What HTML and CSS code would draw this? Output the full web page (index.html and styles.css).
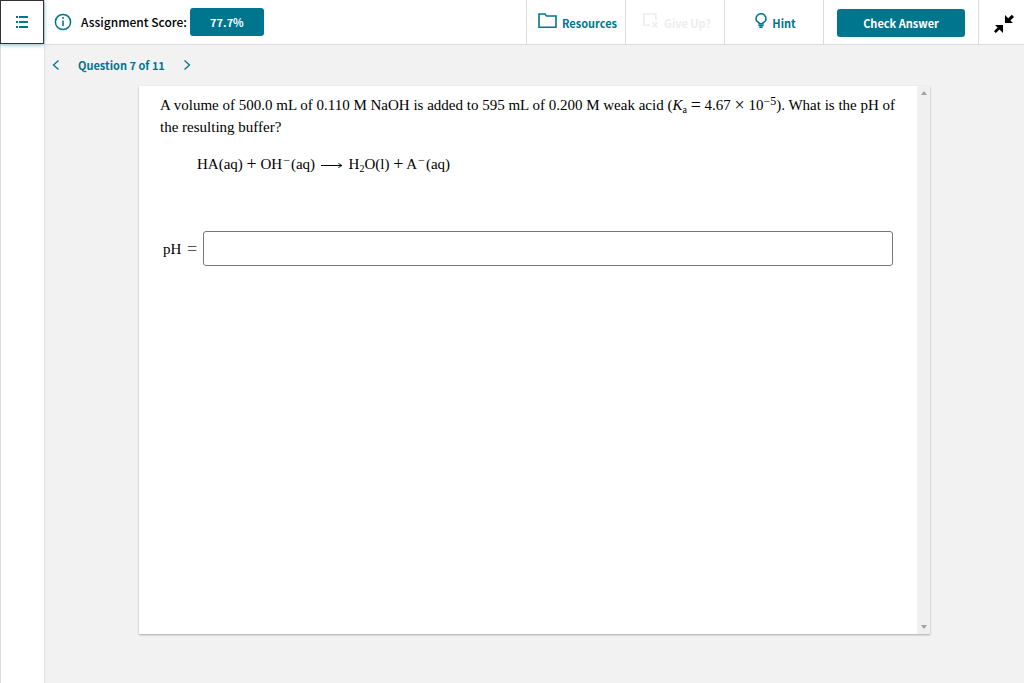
FILE: index.html
```
<!DOCTYPE html>
<html lang="en">

<head>
   <meta charset="UTF-8">
   <meta name="viewport" content="width=device-width, initial-scale=1.0">
   <title>Question 7 of 11</title>
   <link rel="stylesheet" href="styles.css">
</head>

<body>
   <aside class="sidebar">
      <button class="menu" aria-label="Question list">
         <svg width="14" height="14" viewBox="0 0 14 14" fill="currentColor">
            <path d="M1 1h2v2H1zM4 1h9v2H4zM1 6h2v2H1zM4 6h9v2H4zM1 11h2v2H1zM4 11h9v2H4z" />
         </svg>
      </button>
   </aside>
   <div class="page">
      <header class="topbar">
         <div class="score">
            <svg width="18" height="18" viewBox="0 0 18 18" fill="none" stroke="currentColor">
               <circle cx="9" cy="9" r="7.6" stroke-width="1.5" />
               <path d="M9 7.500V13" stroke-width="1.6" />
               <circle cx="9" cy="5" r="1" fill="currentColor" stroke="none" />
            </svg>
            <span class="score-label">Assignment Score:</span>
            <button class="btn score-btn">77.7%</button>
         </div>
         <nav class="tools">
            <button class="tool">
               <svg width="19" height="16" viewBox="0 0 19 16" fill="none" stroke="currentColor" stroke-width="1.6">
                  <path d="M1 14.2V1h6l1.5 2H18v11.2z" />
               </svg>
               <span class="tool-text">Resources</span>
            </button>
            <button class="tool" disabled>
               <svg width="17" height="16" viewBox="0 0 17 16" fill="none" stroke="currentColor" stroke-width="1.6">
                  <path d="M8 12.2H1.8V1h12v6M10.5 9.5l5 5M15.5 9.5l-5 5" />
               </svg>
               <span class="tool-text">Give Up?</span>
            </button>
            <button class="tool">
               <svg width="12" height="16" viewBox="0 0 12 16" fill="none" stroke="currentColor" stroke-width="1.5">
                  <path d="M4 10.8V9.6C2 8.8 1 7.4 1 5.7a5 5 0 0 1 10 0c0 1.700-1 3.100-3 3.900v1.200zM3.400 12.600h5.200M4.400 14.300h3.200" />
               </svg>
               <span class="tool-text">Hint</span>
            </button>
            <div class="check">
               <button class="btn check-btn">Check Answer</button>
            </div>
            <button class="shrink" aria-label="Exit full screen">
               <svg width="20" height="20" viewBox="0 0 20 20" fill="currentColor">
                  <path d="M11 1v8h8l-2.600-2.600L20 3l-2.200-2.200-3.600 3.500z" />
                  <path d="M9 19v-8H1l2.600 2.600L0 17.200l1.800 1.800 3.700-3.500z" />
               </svg>
            </button>
         </nav>
      </header>
      <div class="pager">
         <button class="arrow" aria-label="Previous question">
            <svg width="8" height="12" viewBox="0 0 8 12" fill="none" stroke="currentColor" stroke-width="1.3">
               <path d="M6.500 1.500L1.500 6l5 4.500" />
            </svg>
         </button>
         <span>Question 7 of 11</span>
         <button class="arrow" aria-label="Next question">
            <svg width="8" height="12" viewBox="0 0 8 12" fill="none" stroke="currentColor" stroke-width="1.3">
               <path d="M1.500 1.500l5 4.500-5 4.500" />
            </svg>
         </button>
      </div>
      <main class="card">
         <div class="question">
            <p>A volume of 500.0 mL of 0.110 M NaOH is added to 595 mL of 0.200 M weak acid (<i>K</i><sub>a</sub> <span class="op">=</span> 4.67 <span class="op">×</span> 10<sup>−5</sup>). What is the pH of the resulting buffer?</p>
            <p class="equation">HA(aq) <span class="op">+</span> OH<sup>−</sup>(aq)
               <svg class="long-arrow" width="22" height="8" viewBox="0 0 22 8" fill="none" stroke="currentColor">
                  <path d="M0 4.500h21M17.500 2q1 2 3.500 2.500-2.500.5-3.500 2.500" />
               </svg>
               H<sub>2</sub>O(l) <span class="op">+</span> A<sup>−</sup>(aq)</p>
            <div class="answer">
               <label for="ph">pH <span class="op equals">=</span></label>
               <input class="ph-input" id="ph" type="text">
            </div>
         </div>
         <div class="scroll">
            <svg width="6" height="4" viewBox="0 0 6 4" fill="currentColor"><path d="M0 4l3-4 3 4z" /></svg>
            <svg width="6" height="4" viewBox="0 0 6 4" fill="currentColor"><path d="M0 0l3 4 3-4z" /></svg>
         </div>
      </main>
   </div>
</body>

</html>
```
FILE: styles.css
```
* {
   padding: 0;
   margin: 0;
   box-sizing: border-box;
}

body {
   display: flex;
   min-height: 100vh;
   background-color: #f2f2f2;
   color: #000;
   font-family: "Noto Sans CJK SC", "Open Sans", sans-serif;
   font-size: 11px;
   font-weight: 700;
}

button {
   border: none;
   background: none;
   color: #00758e;
   font: inherit;
   cursor: pointer;
}

svg {
   flex: none;
}

.sidebar {
   width: 45px;
   flex: none;
   background-color: #fff;
   border-left: 1px solid #dcdcdc;
   border-right: 1px solid #e2e2e2;
}

.menu {
   display: flex;
   align-items: center;
   justify-content: center;
   width: 44px;
   height: 44px;
   margin-left: -1px;
   border: 1px solid #333;
   background-color: #fff;
   box-shadow: 0 1px 4px rgba(0, 117, 142, 0.5);
   position: relative;
}

.page {
   display: flex;
   flex-direction: column;
   flex: 1;
   min-width: 0;
}

.topbar {
   display: flex;
   justify-content: space-between;
   height: 45px;
   background-color: #fff;
   border-bottom: 1px solid #dcdcdc;
}

.score {
   display: flex;
   align-items: center;
   padding-left: 9px;
   color: #00758e;
}

.score-label {
   margin: 0 3px 2px 9px;
   color: #000;
   font-size: 12px;
   font-weight: 500;
}

.btn {
   height: 28px;
   padding-bottom: 1px;
   border-radius: 3px;
   background-color: #00758e;
   color: #fff;
}

.score-btn {
   width: 74px;
}

.tools {
   display: flex;
}

.tool {
   display: flex;
   align-items: center;
   justify-content: center;
   gap: 5px;
   width: 99px;
   padding: 0 0 3px 3px;
   border-left: 1px solid #dcdcdc;
}

.tool-text {
   padding-top: 4px;
}

.tool:disabled {
   color: #ededed;
   cursor: default;
}

.check {
   display: flex;
   align-items: center;
   padding: 2px 13px 0;
   border-left: 1px solid #dcdcdc;
}

.check-btn {
   width: 128px;
}

.shrink {
   display: flex;
   align-items: center;
   justify-content: center;
   width: 46px;
   padding: 4px 0 0 4px;
   border-left: 1px solid #dcdcdc;
   color: #000;
}

.pager {
   display: flex;
   align-items: center;
   gap: 18px;
   height: 41px;
   padding: 0 0 2px 7px;
   color: #00758e;
}

.arrow {
   display: flex;
}

.card {
   display: flex;
   width: 100%;
   max-width: 791px;
   min-height: 548px;
   margin: 0 auto;
   background-color: #fff;
   box-shadow: 0 1px 2px rgba(0, 0, 0, 0.3);
}

.question {
   flex: 1;
   padding: 8px 20px 8px 21px;
   font-family: "Liberation Serif", serif;
   font-size: 15px;
   font-weight: 400;
   line-height: 22px;
}

sub,
sup {
   font-size: 10px;
   line-height: 0;
   vertical-align: -3px;
}

sup {
   font-size: 12px;
   vertical-align: 5px;
}

.op {
   font-size: 18px;
   line-height: 0;
   vertical-align: -1px;
}

.equation {
   margin-top: 15px;
   padding-left: 37px;
}

.equation sup {
   margin: 0 1px;
}

.long-arrow {
   margin: 0 2px;
}

.answer {
   display: flex;
   align-items: center;
   gap: 6px;
   margin-top: 56px;
   padding: 0 4px 0 3px;
}

.equals {
   margin-left: 2px;
   color: #555;
}

.ph-input {
   flex: 1;
   min-width: 0;
   height: 35px;
   padding: 0 8px;
   border: 1px solid #777;
   border-radius: 3px;
   font: inherit;
}

.scroll {
   display: flex;
   flex-direction: column;
   align-items: center;
   justify-content: space-between;
   width: 13px;
   padding: 5px 0;
   background-color: #f0f0f0;
   color: #a3a3a3;
}
```
